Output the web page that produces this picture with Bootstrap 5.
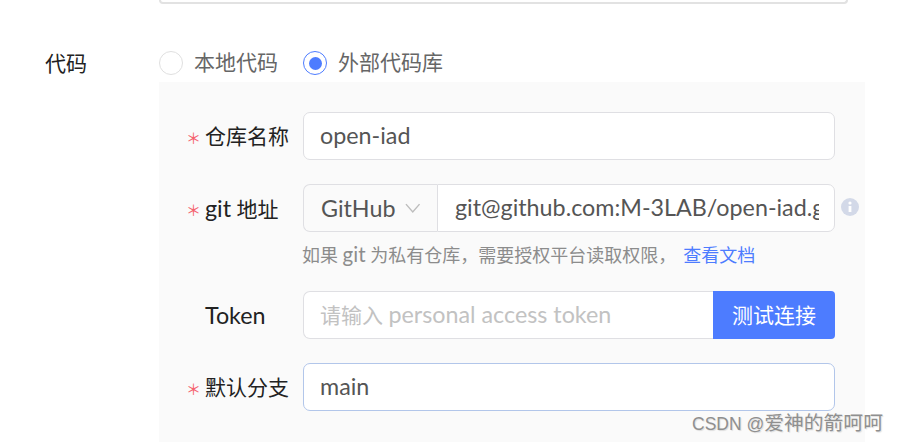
<!DOCTYPE html>
<html lang="zh">
<head>
<meta charset="utf-8">
<title>代码</title>
<link rel="stylesheet" href="https://cdn.jsdelivr.net/npm/bootstrap@5.3.0/dist/css/bootstrap.min.css">
<style>
html,body{height:442px;overflow:hidden;background:#fff}
body{font-family:"Lato","Noto Sans CJK SC",sans-serif;font-size:21px;color:#222;position:relative}
.lat{font-size:23.3px}
.shell{padding-left:45px;width:865px}
.cut-input{height:4px;margin-left:114px;margin-right:17px;border:2px solid #e2e2e2;border-top:0;border-radius:0 0 7px 7px}
.code-row{margin-top:40px}
.code-label{width:114px;line-height:30px;padding-top:4px}
.radio-line{height:38px;gap:11px;color:#666}
.rad-txt{margin-top:-3px}
.fake-radio{width:24px;height:24px;border-radius:50%;border:1.5px solid #e0e0e0;background:#fff;flex:none}
.fake-radio.is-on{border-color:#4d7cff;position:relative}
.fake-radio.is-on::after{content:"";position:absolute;inset:4.5px;border-radius:50%;background:#4d7cff}
.radio-gap{width:3px}
.panel{background:#fafafa;height:360px;padding:30px 30px 0 29px}
.f-row{height:48px;margin-bottom:24px}
.f-label{width:115px;flex:none;gap:7px;color:#222;white-space:nowrap}
.req{color:#f5626e;font-size:15px;line-height:1;width:10px;flex:none;display:inline-block;margin:4px 0 0 -2px;padding-right:2px;box-sizing:content-box}
.f-box{flex:1;height:48px;border:1.5px solid #dfdfe3;border-radius:7px;background:#fff;padding:0 16px;color:#555;line-height:45px;overflow:hidden;white-space:nowrap;min-width:0}
.is-focus{border-color:#b2c6ea}
.sel-box{width:134px;flex:none;background:#fafafa;border-radius:7px 0 0 7px;border-right:0;gap:10px;padding:0 16px 0 17px}
.url-box{border-radius:0 7px 7px 0;padding:0 15px 0 17px}
.url-clip{display:block;overflow:hidden}
.ph{color:#c2c2c2}
.tok-box{border-radius:7px 0 0 7px;border-right:0}
.test-btn{width:122px;height:48px;flex:none;background:#4d7cff;color:#fff;border:0;border-radius:0 4px 4px 0;font-size:21px;padding:0}
.info-ic{position:absolute;left:538px;top:14px}
.f-ctrl{position:relative;width:532px;flex:none}
.hint{margin:8px 0 0 114px;height:51px;font-size:18px;line-height:28px;color:#8c8c8c;white-space:nowrap}
.hint .lat{font-size:20.5px}
.hint a{color:#4d7cff;text-decoration:none;margin-left:7px}
.wm{position:absolute;left:692px;top:410px;font-family:"Liberation Sans","Noto Sans CJK SC",sans-serif;font-size:19.8px;line-height:26px;color:#8f8f8f;text-shadow:1px 1px 1px rgba(0,0,0,.12);white-space:nowrap}
.wm span{font-size:17.5px}
</style>
</head>
<body>
<div class="shell">
  <div class="cut-input"></div>
  <div class="d-flex code-row">
    <div class="code-label flex-none">代码</div>
    <div class="flex-grow-1">
      <div class="d-flex align-items-center radio-line">
        <span class="fake-radio"></span><span class="rad-txt">本地代码</span>
        <span class="radio-gap"></span>
        <span class="fake-radio is-on"></span><span class="rad-txt">外部代码库</span>
      </div>
      <div class="panel">
        <div class="d-flex f-row">
          <div class="d-flex align-items-center f-label"><span class="req">＊</span><span>仓库名称</span></div>
          <div class="f-ctrl d-flex"><div class="f-box"><span class="lat">open-iad</span></div></div>
        </div>
        <div class="d-flex f-row mb-0">
          <div class="d-flex align-items-center f-label"><span class="req">＊</span><span><span class="lat">git</span> 地址</span></div>
          <div class="f-ctrl d-flex">
            <div class="f-box sel-box d-flex align-items-center"><span class="lat">GitHub</span>
              <svg width="16" height="10" viewBox="0 0 16 10" fill="none" stroke="#bdbdbd" stroke-width="1.5"><path d="M1 1l7 8 7-8"/></svg>
            </div>
            <div class="f-box url-box"><span class="url-clip lat">git@github.com:M-3LAB/open-iad.git</span></div>
            <svg class="info-ic" width="18" height="18" viewBox="0 0 18 18"><circle cx="9" cy="9" r="9" fill="#d3d9e8"/><circle cx="9" cy="5" r="1.6" fill="#fff"/><path d="M7.6 8h2.8v6H7.6z" fill="#fff"/></svg>
          </div>
        </div>
        <div class="hint">如果 <span class="lat">git</span> 为私有仓库，需要授权平台读取权限，<a href="#">查看文档</a></div>
        <div class="d-flex f-row">
          <div class="d-flex align-items-center f-label"><span class="req"></span><span class="lat">Token</span></div>
          <div class="f-ctrl d-flex">
            <div class="f-box tok-box ph">请输入 <span class="lat">personal access token</span></div>
            <button class="test-btn" type="button">测试连接</button>
          </div>
        </div>
        <div class="d-flex f-row">
          <div class="d-flex align-items-center f-label"><span class="req">＊</span><span>默认分支</span></div>
          <div class="f-ctrl d-flex"><div class="f-box is-focus"><span class="lat">main</span></div></div>
        </div>
      </div>
    </div>
  </div>
</div>
<div class="wm"><span>CSDN @</span>爱神的箭呵呵</div>
</body>
</html>
